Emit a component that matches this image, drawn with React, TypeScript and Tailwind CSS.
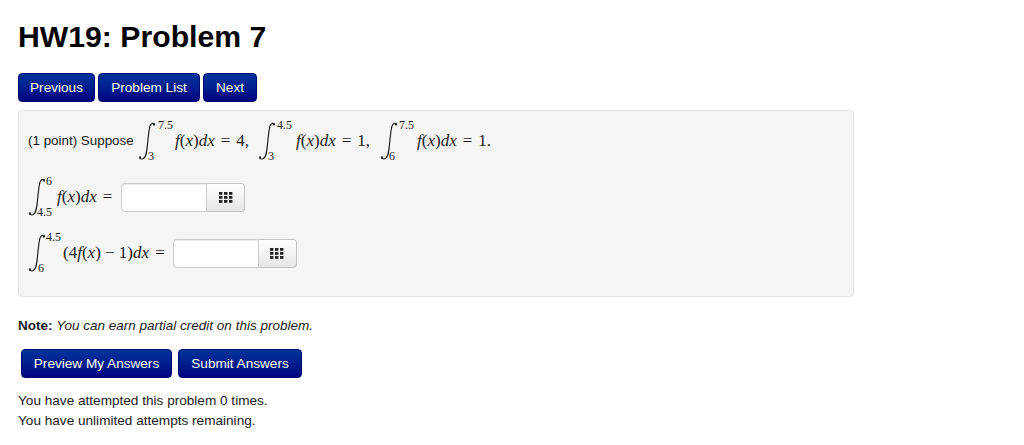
const sans = "font-['Liberation_Sans',Arial,sans-serif]";
const serif = "font-['Liberation_Serif','Times_New_Roman',serif]";

const NavButton = ({ label, className }: { label: string; className: string }) => (
  <button className={`h-[29px] rounded-[4px] border border-[#000a6e] bg-gradient-to-b from-[#00339c] to-[#00007f] text-[13.6px] leading-none text-white [text-shadow:0_-1px_0_rgba(0,0,0,0.25)] ${className}`}>
    {label}
  </button>
);

const IntegralSign = () => (
  <svg width="18" height="38" viewBox="0 0 18 38" className="shrink-0">
    <path
      d="M16.6 2.4C15.2.6 12.8 1 11.8 4.6 10.8 8.4 10.2 16 9.3 24 8.7 30 8.2 35.8 4.8 36.8 3.2 37.2 2 36.8 1.4 35.8"
      fill="none"
      stroke="#1a1a1a"
      strokeWidth="1.15"
    />
    <circle cx="16" cy="2.6" r="1.1" fill="#1a1a1a" />
    <circle cx="2" cy="35.4" r="1.1" fill="#1a1a1a" />
  </svg>
);

// limits sit beside the sign: the upper one to the right, the lower one tucked under the hook
const Integral = ({ upper, lower, width, upperLeft, lowerLeft }: { upper: string; lower: string; width: string; upperLeft: string; lowerLeft: string }) => (
  <span className={`relative inline-block h-[38px] shrink-0 ${width}`}>
    <IntegralSign />
    <span className={`absolute -top-[4px] text-[12px] leading-[14px] ${serif} ${upperLeft}`}>{upper}</span>
    <span className={`absolute -bottom-[3px] text-[12px] leading-[14px] ${serif} ${lowerLeft}`}>{lower}</span>
  </span>
);

const Equation = ({ right }: { right: string }) => (
  <span className={`flex items-baseline whitespace-pre text-[17px] ${serif}`}>
    <i>f</i>(<i>x</i>)<i>dx</i>
    <span className="mx-[6px]">=</span>
    {right}
  </span>
);

const AnswerBox = () => (
  <span className="inline-flex h-[29px] shrink-0">
    <span className="h-full w-[86px] rounded-l-[4px] border border-[#cccccc] bg-white shadow-[inset_0_1px_1px_rgba(0,0,0,0.075)]" />
    <span className="flex h-full w-[38px] items-center justify-center rounded-r-[4px] border border-l-0 border-[#c4c4c4] bg-gradient-to-b from-white to-[#e6e6e6]">
      <svg width="14" height="11" viewBox="0 0 14 11">
        <g fill="#222">
          <rect x="0" y="0" width="3.4" height="2.8" />
          <rect x="5" y="0" width="3.4" height="2.8" />
          <rect x="10" y="0" width="3.4" height="2.8" />
          <rect x="0" y="4" width="3.4" height="2.8" />
          <rect x="5" y="4" width="3.4" height="2.8" />
          <rect x="10" y="4" width="3.4" height="2.8" />
          <rect x="0" y="8" width="3.4" height="2.8" />
          <rect x="5" y="8" width="3.4" height="2.8" />
          <rect x="10" y="8" width="3.4" height="2.8" />
        </g>
      </svg>
    </span>
  </span>
);

export default function App() {
  return (
    <div className={`h-[445px] w-[1024px] overflow-hidden bg-white pl-[18px] text-[#1a1a1a] ${sans}`}>
      <h1 className="pt-[19px] text-[30.2px] font-bold leading-[36px] text-black">HW19: Problem 7</h1>

      <div className="mt-[18px] flex gap-[3px]">
        <NavButton label="Previous" className="w-[77px]" />
        <NavButton label="Problem List" className="w-[102px]" />
        <NavButton label="Next" className="w-[54px]" />
      </div>

      <div className="mt-[8px] h-[187px] w-[836px] rounded-[4px] border border-[#e3e3e3] bg-[#f5f5f5] pl-[9px] pt-[10px]">
        <div className="flex h-[40px] items-center">
          <span className="w-[110px] whitespace-nowrap text-[13.4px]">(1 point) Suppose</span>
          <Integral upper="7.5" lower="3" width="w-[37px]" upperLeft="left-[20px]" lowerLeft="left-[10px]" />
          <Equation right="4," />
          <span className="w-[9px]" />
          <Integral upper="4.5" lower="3" width="w-[38px]" upperLeft="left-[19px]" lowerLeft="left-[10px]" />
          <Equation right="1," />
          <span className="w-[10px]" />
          <Integral upper="7.5" lower="6" width="w-[37px]" upperLeft="left-[19px]" lowerLeft="left-[9px]" />
          <Equation right="1." />
        </div>

        <div className="mt-[16px] flex h-[40px] items-center">
          <Integral upper="6" lower="4.5" width="w-[29px]" upperLeft="left-[18px]" lowerLeft="left-[9px]" />
          <Equation right="" />
          <span className="w-[3px]" />
          <AnswerBox />
        </div>

        <div className="mt-[16px] flex h-[40px] items-center">
          <Integral upper="4.5" lower="6" width="w-[35px]" upperLeft="left-[18px]" lowerLeft="left-[10px]" />
          <span className={`whitespace-pre text-[17px] ${serif}`}>
            (4<i>f</i>(<i>x</i>) − 1)<i>dx</i><span className="ml-[2px]"> =</span>
          </span>
          <span className="w-[8px]" />
          <AnswerBox />
        </div>
      </div>

      <p className="mt-[21px] text-[13.5px] leading-[16px]">
        <b>Note:</b> <i>You can earn partial credit on this problem.</i>
      </p>

      <div className="ml-[3px] mt-[15px] flex gap-[6px]">
        <NavButton label="Preview My Answers" className="w-[151px]" />
        <NavButton label="Submit Answers" className="w-[124px]" />
      </div>

      <div className="mt-[13px] text-[13.6px] leading-[19.5px]">
        <p>You have attempted this problem 0 times.</p>
        <p>You have unlimited attempts remaining.</p>
      </div>
    </div>
  );
}
